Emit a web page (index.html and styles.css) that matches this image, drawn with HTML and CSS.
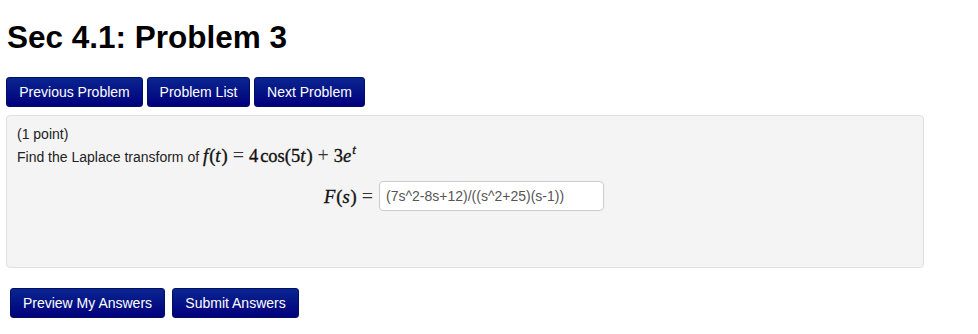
FILE: index.html
```html
<!DOCTYPE html>
<html>
<head>
<meta charset="utf-8">
<link rel="stylesheet" href="styles.css">
</head>
<body>
<div class="page">
  <h1 class="title">Sec 4.1: Problem 3</h1>
  <div class="nav">
    <a class="btn">Previous Problem</a>
    <a class="btn">Problem List</a>
    <a class="btn">Next Problem</a>
  </div>
  <div class="panel">
    <div class="line">(1 point)</div>
    <div class="line">Find the Laplace transform of <span class="math"><i>f</i>(<i>t</i>)<span class="op">=</span>4<span class="fn">cos</span>(5<i>t</i>)<span class="op">+</span>3<i>e</i><sup><i>t</i></sup></span></div>
    <div class="answer-row">
      <span class="math"><i>F</i>(<i>s</i>)<span class="op">=</span></span>
      <input class="answer" type="text" value="(7s^2-8s+12)/((s^2+25)(s-1))">
    </div>
  </div>
  <div class="submit">
    <a class="btn btn-lg">Preview My Answers</a>
    <a class="btn btn-lg">Submit Answers</a>
  </div>
</div>
</body>
</html>
```
FILE: styles.css
```css
html, body {
  margin: 0;
  padding: 0;
  background: #fff;
}
.page {
  padding: 0 6px;
  font-family: "Liberation Sans", Arial, sans-serif;
  font-size: 14px;
  color: #222;
}
.title {
  margin: 0;
  padding-top: 20px;
  font-size: 31.5px;
  line-height: 35px;
  font-weight: bold;
  color: #000;
  padding-left: 1px;
}
.nav {
  margin-top: 22px;
  display: flex;
  gap: 4px;
}
.btn {
  display: inline-flex;
  align-items: center;
  justify-content: center;
  box-sizing: border-box;
  height: 30px;
  padding: 0 10px;
  color: #fff;
  font-size: 14px;
  background: linear-gradient(#0a2590, #00007c);
  border: 1px solid #001060;
  border-radius: 3px;
  white-space: nowrap;
}
.nav .btn:nth-child(1) { width: 137px; }
.nav .btn:nth-child(2) { width: 103px; }
.nav .btn:nth-child(3) { width: 111px; }
.panel {
  margin-top: 8px;
  box-sizing: border-box;
  width: 918px;
  height: 153px;
  background: #f4f4f4;
  border: 1px solid #e0e0e0;
  border-radius: 4px;
  padding: 9px 10px;
}
.line {
  line-height: 22px;
  color: #222;
}
.line:first-child {
  line-height: 19px;
}
.math {
  font-family: "Liberation Serif", "Times New Roman", serif;
  font-size: 18.5px;
  color: #111;
  -webkit-text-stroke: 0.35px #111;
}
.math i {
  padding-right: 1px;
}
.math .op {
  font-size: 20px;
  color: #333;
  margin: 0 5px;
  -webkit-text-stroke: 0;
}
.math .fn {
  margin-left: 2px;
}
.math sup {
  font-size: 13px;
  vertical-align: 8px;
  line-height: 0;
}
.answer-row {
  margin-top: 13px;
  display: flex;
  align-items: center;
  justify-content: center;
  gap: 0;
  padding-right: 2px;
}
.answer-row .op {
  margin-right: 6px;
}
.answer {
  box-sizing: border-box;
  width: 225px;
  height: 30px;
  border: 1px solid #ccc;
  border-radius: 4px;
  background: #fff;
  padding: 0 6px;
  font-family: "Liberation Sans", Arial, sans-serif;
  font-size: 14px;
  color: #555;
}
.submit {
  margin-top: 20px;
  padding-left: 4px;
  display: flex;
  gap: 7px;
}
.submit .btn:nth-child(1) { width: 155px; }
.submit .btn:nth-child(2) { width: 127px; }
```
